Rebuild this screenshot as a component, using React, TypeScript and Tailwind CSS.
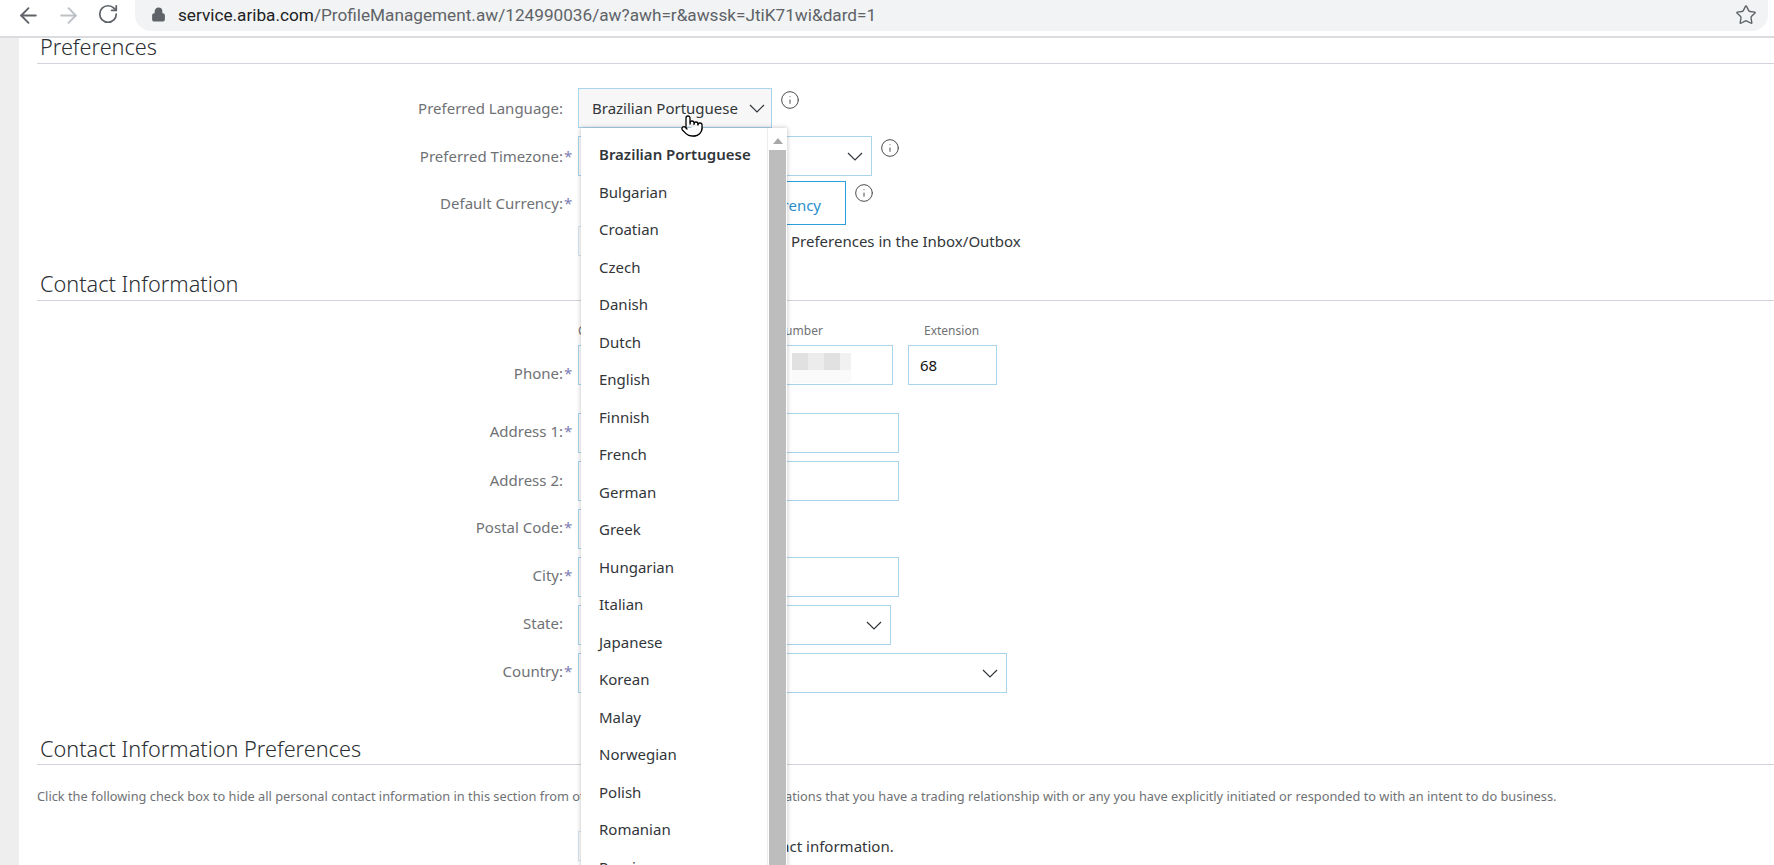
import { ArrowLeft, ArrowRight, Info, Lock, Pointer, RotateCw, Star } from "lucide-react";
import type { ReactNode } from "react";

const languages = [
  "Brazilian Portuguese",
  "Bulgarian",
  "Croatian",
  "Czech",
  "Danish",
  "Dutch",
  "English",
  "Finnish",
  "French",
  "German",
  "Greek",
  "Hungarian",
  "Italian",
  "Japanese",
  "Korean",
  "Malay",
  "Norwegian",
  "Polish",
  "Romanian",
  "Russian",
];

const Chevron = () => (
  <svg width="16" height="9" viewBox="0 0 16 9" fill="none" className="shrink-0">
    <polyline points="1,1 8,8 15,1" stroke="#32363a" strokeWidth="1.2" />
  </svg>
);

const InfoMark = () => (
  <Info size={20} strokeWidth={1.2} className="ml-[8px] mt-[2px] shrink-0 self-start text-[#4a4d50]" />
);

const Heading = ({ children, className }: { children: ReactNode; className: string }) => (
  <div className={`border-b border-[#d3d3dd] pl-[3px] text-[21.7px] leading-[24px] font-light text-[#2c2f33] ${className}`}>
    {children}
  </div>
);

const Row = ({
  label,
  required,
  className,
  labelClass,
  children,
}: {
  label: string;
  required?: boolean;
  className?: string;
  labelClass?: string;
  children: ReactNode;
}) => (
  <div className={`flex items-center ${className ?? ""}`}>
    <div className={`w-[526px] shrink-0 text-right text-[15px] leading-[18px] text-[#6f7275] ${labelClass ?? ""}`}>{label}</div>
    <div className={`w-[15px] shrink-0 pl-[1px] text-[15px] leading-[18px] text-[#7d7fb3] ${labelClass ?? ""}`}>{required ? "*" : ""}</div>
    {children}
  </div>
);

const Box = ({ width, children, className }: { width: string; children?: ReactNode; className?: string }) => (
  <div className={`flex h-[40px] shrink-0 items-center justify-end border border-[#a9d4ee] bg-white pr-[8px] ${width} ${className ?? ""}`}>
    {children}
  </div>
);

export default function App() {
  return (
    <div className="flex h-[865px] w-[1774px] flex-col overflow-hidden bg-white font-['Noto_Sans',sans-serif]">
      <div className="flex h-[38px] shrink-0 items-start border-b-2 border-[#dadce0] pl-[8px] pr-[6px]">
        <div className="flex h-[30px] w-[40px] items-center justify-center text-[#5f6368]">
          <ArrowLeft size={25} strokeWidth={1.8} />
        </div>
        <div className="flex h-[30px] w-[40px] items-center justify-center text-[#bdc1c6]">
          <ArrowRight size={25} strokeWidth={1.8} />
        </div>
        <div className="flex h-[28px] w-[40px] items-center justify-center text-[#5f6368]">
          <RotateCw size={22} strokeWidth={1.9} />
        </div>
        <div className="ml-[7px] flex h-[31px] flex-1 items-center rounded-b-[16px] bg-[#f1f3f4] pb-[2px] pl-[16px] pr-[11px]">
          <Lock size={15} strokeWidth={2.4} className="shrink-0 fill-[#5f6368] text-[#5f6368]" />
          <div className="ml-[12px] font-['Roboto',sans-serif] text-[17.2px] leading-[20px] text-[#5f6368]">
            <span className="text-[#202124]">service.ariba.com</span>/ProfileManagement.aw/124990036/aw?awh=r&amp;awssk=JtiK71wi&amp;dard=1
          </div>
          <Star size={22} strokeWidth={1.5} className="ml-auto text-[#5f6368]" />
        </div>
      </div>

      <div className="flex min-h-0 flex-1">
        <div className="w-[19px] shrink-0 bg-[#eeeeee]" />
        <div className="min-w-0 flex-1 pl-[18px]">
          <Heading className="-mt-[3px] h-[29px]">Preferences</Heading>

          <Row label="Preferred Language:" className="mt-[24px]">
            <div className="relative">
              <div className="flex h-[40px] w-[194px] items-center justify-between border border-[#a9d4ee] bg-[#f7f7f7] pl-[13px] pr-[6px] text-[15px] text-[#32363a]">
                Brazilian Portuguese
                <Chevron />
              </div>
              <Pointer size={24} strokeWidth={1.3} className="absolute left-[102px] top-[26px] z-20 fill-white text-black" />
              <div className="absolute left-[3px] top-full z-10 flex h-[760px] w-[206px] overflow-hidden bg-white shadow-[0_0_5px_rgba(0,0,0,0.25)]">
                <ul className="flex-1 pt-[7.5px]">
                  {languages.map((name, i) => (
                    <li
                      key={name}
                      className={`flex h-[37.5px] items-center pl-[18px] text-[15px] text-[#32363a] ${i === 0 ? "text-[14.2px] font-semibold" : ""}`}
                    >
                      {name}
                    </li>
                  ))}
                </ul>
                <div className="flex w-[20px] shrink-0 flex-col items-center border-l border-[#ededed] pr-[1px] pl-[1px]">
                  <div className="flex h-[22px] items-center justify-center">
                    <div className="mt-[3px] h-0 w-0 border-x-[5px] border-b-[6px] border-x-transparent border-b-[#a8a8a8]" />
                  </div>
                  <div className="w-full flex-1 bg-[#bdbdbd]" />
                </div>
              </div>
            </div>
            <InfoMark />
          </Row>

          <Row label="Preferred Timezone:" required className="mt-[8px]">
            <Box width="w-[294px]">
              <Chevron />
            </Box>
            <InfoMark />
          </Row>

          <Row label="Default Currency:" required className="mt-[5px]">
            <div className="ml-[5px] flex h-[44px] w-[263px] shrink-0 items-center justify-end border border-[#2a9fd8] pr-[24px] pt-[4px] text-[15px] text-[#2a8fcf]">
              Currency
            </div>
            <InfoMark />
          </Row>

          <Row label="" className="mt-[1px]">
            <div className="h-[30px] w-[200px] shrink-0 border border-[#d5e6f1]" />
            <span className="ml-[13px] text-[15px] text-[#32363a]">Preferences in the Inbox/Outbox</span>
          </Row>

          <Heading className="mt-[16px] h-[29px]">Contact Information</Heading>

          <Row label="Phone:" required className="mt-[21px] !items-end" labelClass="pb-[3px]">
            <div className="flex items-end">
              <div className="w-[171px]">
                <div className="mb-[5px] text-[12px] leading-[18px] text-[#6f7275]">Country Code</div>
                <Box width="w-[171px]" />
              </div>
              <div className="ml-[11px] w-[133px]">
                <div className="mb-[5px] pl-[16px] text-[12px] leading-[18px] text-[#6f7275]">Number</div>
                <div className="h-[40px] border border-[#a9d4ee] pl-[31px] pt-[7px]">
                  <div className="flex h-[17px]">
                    <div className="w-[16px] bg-[#e1e1e1]" />
                    <div className="w-[16px] bg-[#ececec]" />
                    <div className="w-[16px] bg-[#e1e1e1]" />
                    <div className="w-[11px] bg-[#f1f1f1]" />
                  </div>
                  <div className="h-[13px] w-[59px] bg-[#fafafa]" />
                </div>
              </div>
              <div className="ml-[15px] w-[89px]">
                <div className="mb-[5px] pl-[16px] text-[12px] leading-[18px] text-[#6f7275]">Extension</div>
                <div className="flex h-[40px] items-center border border-[#a9d4ee] pl-[11px] text-[15px] text-[#111]">68</div>
              </div>
            </div>
          </Row>

          <Row label="Address 1:" required className="mt-[28px]" labelClass="pb-[5px]">
            <Box width="w-[321px]" />
          </Row>
          <Row label="Address 2:" className="mt-[8px]" labelClass="pb-[2px]">
            <Box width="w-[321px]" />
          </Row>
          <Row label="Postal Code:" required className="mt-[8px]" labelClass="pb-[4px]">
            <Box width="w-[150px]" />
          </Row>
          <Row label="City:" required className="mt-[8px]" labelClass="pb-[4px]">
            <Box width="w-[321px]" />
          </Row>
          <Row label="State:" className="mt-[8px]" labelClass="pb-[4px]">
            <Box width="w-[313px]">
              <Chevron />
            </Box>
          </Row>
          <Row label="Country:" required className="mt-[8px]" labelClass="pb-[4px]">
            <Box width="w-[429px]">
              <Chevron />
            </Box>
          </Row>

          <Heading className="mt-[44px] h-[28px]">Contact Information Preferences</Heading>

          <p className="mt-[22px] text-[12.8px] leading-[18px] whitespace-nowrap text-[#6f7275]">
            Click the following check box to hide all personal contact information in this section from other organizations, except organizations that you have a trading relationship with or any you have explicitly initiated or responded to with an intent to do business.
          </p>

          <Row label="" className="mt-[26px]">
            <div className="h-[30px] w-[98px] shrink-0 border border-[#d5e6f1]" />
            <span className="ml-[12px] whitespace-nowrap text-[15px] text-[#32363a]">Hide my contact information.</span>
          </Row>
        </div>
      </div>
    </div>
  );
}
